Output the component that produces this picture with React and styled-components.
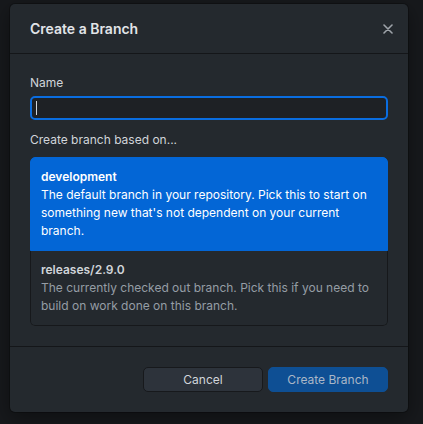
import React from "react";
import styled, { createGlobalStyle } from "styled-components";

const Global = createGlobalStyle`
  html, body { margin: 0; padding: 0; background: #17191c; }
  body {
    font-family: Inter, "Noto Sans", "Liberation Sans", sans-serif;
    -webkit-font-smoothing: antialiased;
  }
`;

const Page = styled.div`
  width: 423px;
  height: 424px;
  padding: 4px 15px 0 10px;
  box-sizing: border-box;
`;

const Dialog = styled.div`
  width: 398px;
  height: 408px;
  background: #24292e;
  border-radius: 5px;
  box-shadow: 0 0 0 1px rgba(0, 0, 0, 0.25), 0 6px 20px rgba(0, 0, 0, 0.4);
  display: flex;
  flex-direction: column;
  color: #d1d5da;
  overflow: hidden;
`;

const Header = styled.div`
  height: 49px;
  display: flex;
  align-items: center;
  justify-content: space-between;
  padding: 0 14px 0 20px;
  border-bottom: 1px solid #141619;
`;

const Title = styled.h1`
  margin: 0;
  font-size: 14px;
  font-weight: 600;
  color: #e1e4e8;
`;

const Close = styled.button`
  background: none;
  border: none;
  padding: 0;
  width: 12px;
  height: 12px;
  display: flex;
  align-items: center;
  justify-content: center;
  color: #9ea3a9;
`;

const Body = styled.div`
  padding: 21px 20px 20px;
  display: flex;
  flex-direction: column;
  flex: 1;
  border-bottom: 1px solid #141619;
`;

const Label = styled.div`
  font-size: 12px;
  line-height: 16px;
  color: #d1d5da;
  margin-bottom: ${(p) => p.$gap}px;
`;

const Field = styled.div`
  height: 24px;
  box-sizing: border-box;
  border: 2px solid #0a6de0;
  border-radius: 5px;
  background: #1e2125;
  display: flex;
  align-items: center;
  padding: 0 4px;
  margin-bottom: 12px;
`;

const Caret = styled.span`
  width: 1px;
  height: 14px;
  background: #d1d5da;
`;

const List = styled.div`
  border-radius: 5px;
  overflow: hidden;
  display: flex;
  flex-direction: column;
`;

const Option = styled.div`
  padding: 10px 10px;
  border: 1px solid ${(p) => (p.$selected ? "#0366d6" : "#16181b")};
  border-top-width: ${(p) => (p.$selected ? "1px" : "0")};
  border-radius: ${(p) => (p.$selected ? "5px 5px 0 0" : "0 0 5px 5px")};
  background: ${(p) => (p.$selected ? "#0366d6" : "#24292e")};
  color: ${(p) => (p.$selected ? "#ffffff" : "#959da5")};
  font-size: 12px;
  line-height: 18px;
`;

const OptionName = styled.div`
  font-weight: 600;
  color: ${(p) => (p.$selected ? "#ffffff" : "#d1d5da")};
`;

const Footer = styled.div`
  height: 65px;
  display: flex;
  align-items: center;
  justify-content: flex-end;
  gap: 5px;
  padding: 0 20px;
`;

const Button = styled.button`
  width: 120px;
  height: 25px;
  border-radius: 5px;
  font-family: inherit;
  font-size: 12px;
  border: 1px solid ${(p) => (p.$primary ? "#0e4f94" : "#17191c")};
  background: ${(p) => (p.$primary ? "#0e4f94" : "#2d333b")};
  color: ${(p) => (p.$primary ? "#aab7c7" : "#d1d5da")};
`;

export default function App() {
  return (
    <Page>
      <Global />
      <Dialog>
        <Header>
          <Title>Create a Branch</Title>
          <Close aria-label="Close">
            <svg width="10" height="10" viewBox="0 0 10 10">
              <path d="M1 1L9 9M9 1L1 9" stroke="currentColor" strokeWidth="1.6" strokeLinecap="round" />
            </svg>
          </Close>
        </Header>
        <Body>
          <Label $gap={5}>Name</Label>
          <Field>
            <Caret />
          </Field>
          <Label $gap={9}>Create branch based on...</Label>
          <List>
            <Option $selected>
              <OptionName $selected>development</OptionName>
              The default branch in your repository. Pick this to start on something new that's not dependent on your current branch.
            </Option>
            <Option>
              <OptionName>releases/2.9.0</OptionName>
              The currently checked out branch. Pick this if you need to build on work done on this branch.
            </Option>
          </List>
        </Body>
        <Footer>
          <Button>Cancel</Button>
          <Button $primary>Create Branch</Button>
        </Footer>
      </Dialog>
    </Page>
  );
}
